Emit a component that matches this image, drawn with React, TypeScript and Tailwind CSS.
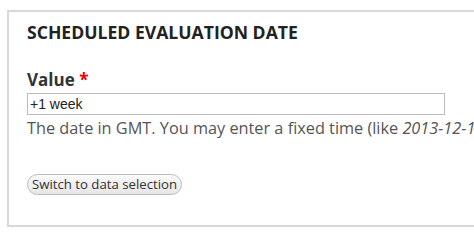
export default function App() {
  return (
    <div className="w-[474px] h-[232px] overflow-hidden bg-white pt-[10px] pl-[7px]" style={{ fontFamily: '"Open Sans", "Liberation Sans", sans-serif' }}>
      <fieldset className="w-[600px] h-[217px] border-2 border-[#d8d8d8] border-r-0 pl-[18px] pt-[10px]">
        <h2 className="text-[17.6px] font-bold text-[#222] leading-[20px]">SCHEDULED EVALUATION DATE</h2>

        <div className="mt-[27px]">
          <label className="block text-[17px] font-bold text-[#333] leading-[22px]">
            Value <span className="text-[#e00]">*</span>
          </label>
          <input
            defaultValue="+1 week"
            className="mt-[2px] block w-[418px] h-[22px] border border-[#bbb] px-[2px] text-[14px] text-[#222] leading-[20px] outline-none"
            style={{ fontFamily: '"Liberation Sans", Arial, sans-serif' }}
          />
          <p className="mt-[3px] text-[16.3px] text-[#555] leading-[20px] whitespace-nowrap">
            The date in GMT. You may enter a fixed time (like <em>2013-12-11 13:45:00</em>)
          </p>
        </div>

        <button className="mt-[36px] block h-[21px] px-[4px] rounded-full border border-[#bbb] bg-gradient-to-b from-[#fafafa] to-[#e6e6e6] text-[13.2px] text-[#333] leading-[17px]">
          Switch to data selection
        </button>
      </fieldset>
    </div>
  )
}
